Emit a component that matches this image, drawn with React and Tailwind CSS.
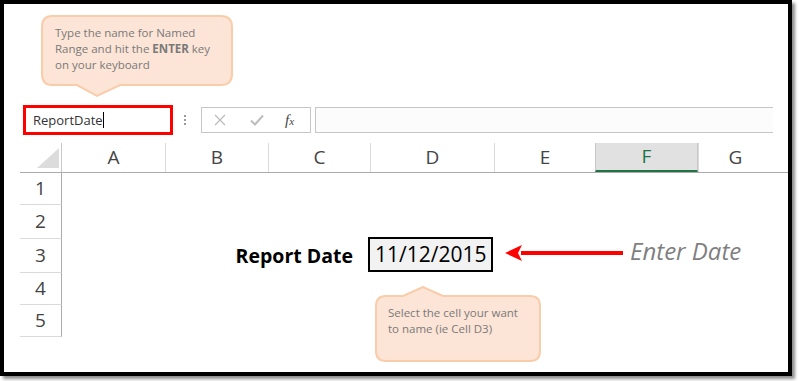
import React from "react";

const cols = [
  { l: "A", w: "w-[103px]" },
  { l: "B", w: "w-[103px]" },
  { l: "C", w: "w-[102px]" },
  { l: "D", w: "w-[124px]" },
  { l: "E", w: "w-[101px]" },
  { l: "F", w: "w-[103px]", sel: true },
  { l: "G", w: "w-[74px]" },
];

const rows = [
  { n: 1, h: "h-[32px]" },
  { n: 2, h: "h-[34px]" },
  { n: 3, h: "h-[34px]" },
  { n: 4, h: "h-[32px]" },
  { n: 5, h: "h-[32px]" },
];

function Callout1() {
  return (
    <div className="absolute left-[40px] top-[14px] w-[194px] h-[84px]">
      <svg width="194" height="84" className="absolute left-0 top-0">
        <path
          d="M12 2 H181 Q192 2 192 13 V60 Q192 71 181 71 H80 L57 82 L37 71 H12 Q2 71 2 60 V13 Q2 2 12 2 Z"
          fill="#fce4d6"
          stroke="#f9cda9"
          strokeWidth="2"
        />
      </svg>
      <div className="absolute left-[15px] top-[11px] text-[11.5px] leading-[16px] text-[#7a7a7a] font-['Open_Sans',sans-serif] whitespace-nowrap">
        <div>Type the name for Named</div>
        <div>
          Range and hit the <span className="font-bold">ENTER</span> key
        </div>
        <div>on your keyboard</div>
      </div>
    </div>
  );
}

function Callout2() {
  return (
    <div className="absolute left-[374px] top-[286px] w-[168px] h-[77px]">
      <svg width="168" height="77" className="absolute left-0 top-0">
        <path
          d="M12 10 H29 L49 1 L69 10 H156 Q166 10 166 20 V65 Q166 75 156 75 H12 Q2 75 2 65 V20 Q2 10 12 10 Z"
          fill="#fce4d6"
          stroke="#f9cda9"
          strokeWidth="2"
        />
      </svg>
      <div className="absolute left-[14px] top-[19px] text-[11.5px] leading-[16px] text-[#7a7a7a] font-['Open_Sans',sans-serif] whitespace-nowrap">
        <div>Select the cell your want</div>
        <div>to name (ie Cell D3)</div>
      </div>
    </div>
  );
}

export default function App() {
  return (
    <div className="relative w-[799px] h-[381px] bg-white overflow-hidden font-['Open_Sans',sans-serif]">
      <div className="w-[792px] h-[376px] border-4 border-black shadow-[3px_3px_3px_rgba(0,0,0,0.45)] flex flex-col">
        <div className="h-[101px] shrink-0" />
        {/* formula bar */}
        <div className="flex items-center h-[30px] pl-[19px] shrink-0">
          <div className="w-[150px] h-[30px] border-[3px] border-[#ff0000] flex items-center pl-[7px]">
            <span className="text-[13px] text-[#333] leading-none">ReportDate</span>
            <span className="w-px h-[16px] bg-black" />
          </div>
          <div className="ml-[11px] flex flex-col gap-[2px]">
            <span className="w-[2px] h-[2px] bg-[#9a9a9a]" />
            <span className="w-[2px] h-[2px] bg-[#9a9a9a]" />
            <span className="w-[2px] h-[2px] bg-[#9a9a9a]" />
          </div>
          <div className="ml-[15px] w-[110px] h-[26px] border border-[#c6c6c6] bg-white flex items-center">
            <svg width="12" height="12" viewBox="0 0 12 12" className="ml-[12px]">
              <path d="M1 1 L11 11 M11 1 L1 11" stroke="#bdbdbd" strokeWidth="1.3" />
            </svg>
            <svg width="14" height="12" viewBox="0 0 14 12" className="ml-[24px]">
              <path d="M1 6.5 L5 10.5 L13 1.5" stroke="#bdbdbd" strokeWidth="2" fill="none" />
            </svg>
            <span className="ml-[21px] text-[15px] italic text-[#444] font-['Liberation_Serif',serif] leading-none">
              f<span className="text-[11px]">x</span>
            </span>
          </div>
          <div className="ml-[4px] w-[458px] h-[26px] border-y border-l border-[#c6c6c6] bg-[#fcfcfc]" />
        </div>
        <div className="h-[8px] shrink-0" />
        {/* header */}
        <div className="pl-[16px] flex flex-col">
          <div className="flex h-[30px] border-b border-[#ababab]">
            <div className="relative w-[42px] border-r border-[#c8c8c8]">
              <svg width="42" height="29" className="absolute left-0 top-0">
                <path d="M17 25 L39 25 L39 5 Z" fill="#dcdcdc" />
              </svg>
            </div>
            {cols.map((c, i) => (
              <div
                key={c.l}
                className={`${c.w} flex items-center justify-center text-[19px] ${
                  i > 0 ? "border-l border-[#dadada]" : ""
                } ${
                  c.sel
                    ? "bg-[#e1e1e1] text-[#217346] border-b-2 border-b-[#217346] border-l-[#c8c8c8] border-r border-r-[#c8c8c8]"
                    : "text-[#444]"
                }`}
              >
                {c.l}
              </div>
            ))}
          </div>
          {rows.map((r) => (
            <div key={r.n} className={`flex ${r.h}`}>
              <div className="w-[42px] border-r border-b border-r-[#ababab] border-b-[#dadada] flex items-center justify-center text-[19px] text-[#444]">
                {r.n}
              </div>
              {r.n === 3 ? (
                <>
                  <div className="w-[103px]" />
                  <div className="w-[103px]" />
                  <div className="w-[102px] flex items-center justify-end pr-[17px]">
                    <span className="text-[19.5px] font-bold text-black leading-none whitespace-nowrap">
                      Report Date
                    </span>
                  </div>
                  <div className="w-[124px] relative">
                    <div className="absolute -left-[2px] -top-[2px] w-[125px] h-[35px] border-2 border-black bg-[#f2f2f2] flex items-center pl-[5px]">
                      <span className="text-[21px] text-black leading-none whitespace-nowrap">11/12/2015</span>
                    </div>
                  </div>
                </>
              ) : null}
            </div>
          ))}
        </div>
      </div>

      {/* arrow annotation */}
      <svg width="122" height="18" className="absolute left-[503px] top-[244px]">
        <path d="M18 7 H120 V11 H18 Z" fill="#ff0000" />
        <path d="M2 9 L19 1 L15 9 L19 17 Z" fill="#ff0000" />
      </svg>
      <div className="absolute left-[630px] top-[236px] text-[24px] italic text-[#7f7f7f] leading-[30px] whitespace-nowrap">
        Enter Date
      </div>

      <Callout1 />
      <Callout2 />
    </div>
  );
}
